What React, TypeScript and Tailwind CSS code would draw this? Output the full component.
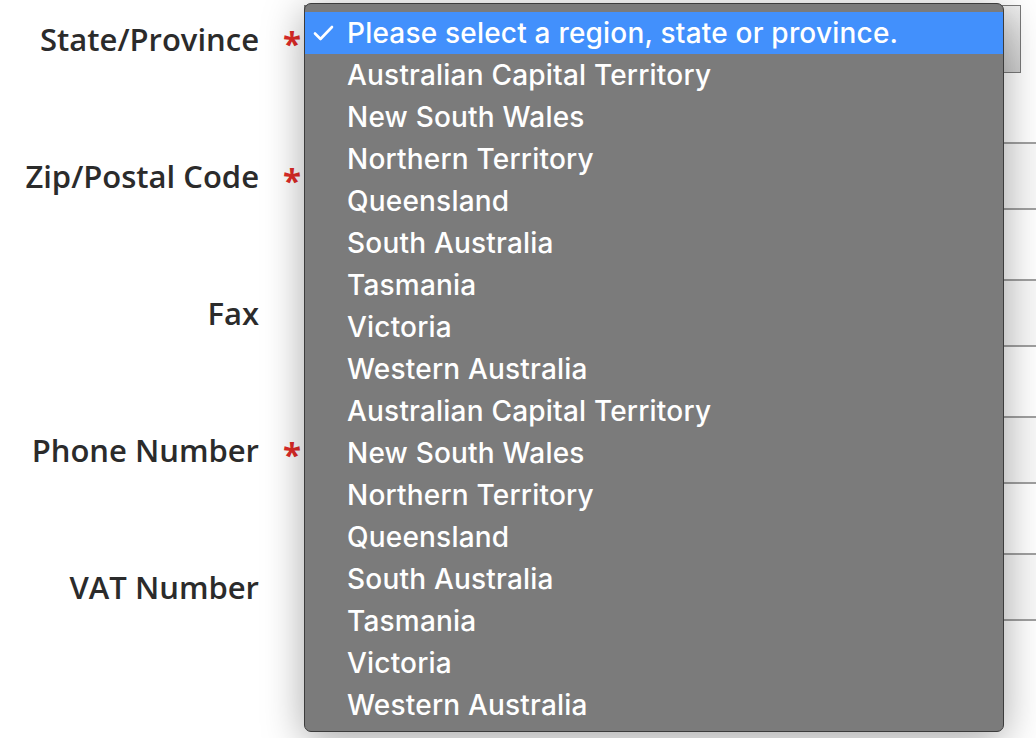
const fields = [
  { label: 'State/Province', required: true, select: true },
  { label: 'Zip/Postal Code', required: true },
  { label: 'Fax', required: false },
  { label: 'Phone Number', required: true },
  { label: 'VAT Number', required: false },
];

const regions = [
  'Australian Capital Territory',
  'New South Wales',
  'Northern Territory',
  'Queensland',
  'South Australia',
  'Tasmania',
  'Victoria',
  'Western Australia',
];

const App = () => {
  return (
    <div className="relative w-[1036px] h-[738px] overflow-hidden bg-white">
      {/* form rows behind the open select */}
      <div className="flex flex-col gap-[69px] pt-[5px]">
        {fields.map((field) => (
          <div key={field.label} className="flex items-center h-[68px]">
            <div className="w-[259px] text-right text-[31px] font-semibold text-[#2b2b2b] font-['Open_Sans',sans-serif] leading-none">
              {field.label}
            </div>
            <div className="w-[45px] flex pl-[24px] pt-[8px]">
              {field.required && (
                <span className="text-[#e02b27] text-[33px] font-bold font-['Open_Sans',sans-serif] leading-none">*</span>
              )}
            </div>
            {field.select ? (
              <div className="w-[717px] h-[68px] border border-[#7a7a7a] bg-gradient-to-b from-[#f0f0f0] to-[#d0d0d0]" />
            ) : (
              <div className="flex-1 h-[68px] border-y-2 border-[#a0a0a0] bg-[#f8f8f8]" />
            )}
          </div>
        ))}
      </div>

      {/* native select popup */}
      <div className="absolute left-[304px] top-[3px] w-[700px] h-[729px] rounded-[7px] border border-[#3c3c3c] bg-[#7b7b7b] shadow-[0_8px_40px_rgba(0,0,0,0.35)] pt-[8px] font-['Inter',sans-serif] font-medium text-white text-[28px] tracking-[0.2px]">
        <div className="flex items-center h-[42px] bg-[#4290fc]">
          <div className="w-[42px] pl-[8px] flex items-center">
            <svg width="21" height="16" viewBox="0 0 21 16" fill="none" stroke="white" strokeWidth="2.6" strokeLinecap="round" strokeLinejoin="round">
              <path d="M2 8.5 L7.5 14 L19 2" />
            </svg>
          </div>
          <span className="leading-none">Please select a region, state or province.</span>
        </div>
        {[...regions, ...regions].map((name, i) => (
          <div key={i} className="flex items-center h-[42px] pl-[42px]">
            <span className="leading-none">{name}</span>
          </div>
        ))}
      </div>
    </div>
  );
};

export default App;
